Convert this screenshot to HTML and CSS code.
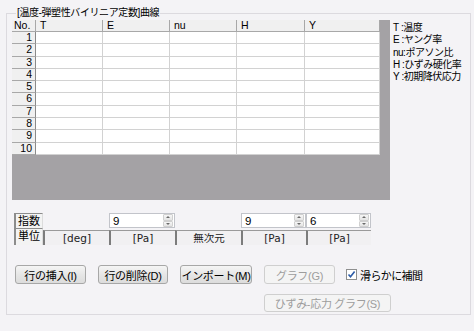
FILE: index.html
```html
<!DOCTYPE html>
<html lang="ja">
<head>
  <meta charset="UTF-8">
  <title>温度-弾塑性バイリニア定数</title>
  <link rel="stylesheet" href="styles.css">
</head>
<body>
  <fieldset class="group">
    <legend>[温度-弾塑性バイリニア定数]曲線</legend>

    <div class="top">
      <div class="grid-wrap">
        <div class="grid">
          <div class="hd corner">No.</div>
          <div class="hd">T</div>
          <div class="hd">E</div>
          <div class="hd">nu</div>
          <div class="hd">H</div>
          <div class="hd">Y</div>
        </div>
        <div class="grid rows" id="rows"></div>
      </div>
      <div class="legend-list">
        <div>T&nbsp;:温度</div>
        <div>E&nbsp;:ヤング率</div>
        <div>nu:ポアソン比</div>
        <div>H&nbsp;:ひずみ硬化率</div>
        <div>Y&nbsp;:初期降伏応力</div>
      </div>
    </div>

    <div class="params">
      <div class="lbl">指数</div>
      <div></div>
      <div class="spin"><span>9</span><i class="arrows"><b class="up"></b><b class="down"></b></i></div>
      <div></div>
      <div class="spin"><span>9</span><i class="arrows"><b class="up"></b><b class="down"></b></i></div>
      <div class="spin"><span>6</span><i class="arrows"><b class="up"></b><b class="down"></b></i></div>

      <div class="lbl">単位</div>
      <div class="unit">[deg]</div>
      <div class="unit">[Pa]</div>
      <div class="unit">無次元</div>
      <div class="unit">[Pa]</div>
      <div class="unit">[Pa]</div>
    </div>

    <div class="actions">
      <button class="btn">行の挿入(I)</button>
      <button class="btn">行の削除(D)</button>
      <button class="btn">インポート(M)</button>
      <button class="btn" disabled>グラフ(G)</button>
      <label class="check">
        <svg width="11" height="11" viewBox="0 0 11 11">
          <rect x="0.5" y="0.5" width="10" height="10" fill="#fff" stroke="#8e8f8f"/>
          <path d="M2.5 5.5 L4.5 7.8 L8.6 2.6" fill="none" stroke="#2d5ca8" stroke-width="1.6"/>
        </svg>
        滑らかに補間
      </label>
      <button class="btn wide" disabled>ひずみ-応力 グラフ(S)</button>
    </div>
  </fieldset>

  <script>
    const rows = document.getElementById('rows');
    let html = '';
    for (let i = 1; i <= 10; i++) {
      html += `<div class="num">${i}</div>`;
      for (let c = 0; c < 5; c++) html += '<div class="cell"></div>';
    }
    rows.innerHTML = html;
  </script>
</body>
</html>
```

FILE: styles.css
```css
body {
  margin: 0;
  background: #f4f3f6;
  font-family: "Liberation Sans", "Noto Sans CJK JP", sans-serif;
  font-size: 11px;
  color: #000;
}
.group {
  margin: 7px 3px 5px 6px;
  padding: 4px 0 0 5px;
  border: 1px solid #dcdadf;
  height: 308px;
  box-sizing: border-box;
}
.group legend {
  padding: 0 1px;
  margin-left: 4px;
  font-size: 10px;
  letter-spacing: -0.4px;
  line-height: 12px;
  color: #000;
}
.top {
  display: flex;
  margin-top: -3px;
}
.grid-wrap {
  width: 378px;
  height: 180px;
  background: #a4a2a5;
}
.grid {
  display: grid;
  grid-template-columns: 24px 67px 67px 67px 68px 75px;
  width: 368px;
}
.grid > div {
  box-sizing: border-box;
  overflow: hidden;
  white-space: nowrap;
}
.hd {
  height: 12px;
  line-height: 11px;
  padding-left: 4px;
  background: #f0f0f0;
  border-right: 1px solid #a8a8a8;
  border-bottom: 1px solid #a8a8a8;
  font-size: 10.5px;
}
.hd.corner {
  padding-left: 2px;
}
.rows {
  grid-auto-rows: 12.3px;
}
.num {
  background: #f0f0f0;
  border-right: 1px solid #8a8a8a;
  border-bottom: 1px solid #a8a8a8;
  text-align: right;
  padding-right: 3px;
  line-height: 11.5px;
  font-size: 10.5px;
}
.cell {
  background: #fff;
  border-right: 1px solid #d2d2d2;
  border-bottom: 1px solid #d2d2d2;
}
.legend-list {
  padding: 2px 0 0 3px;
  line-height: 12.3px;
  font-size: 10px;
  letter-spacing: -0.5px;
}
.params {
  display: grid;
  grid-template-columns: 29px 66px 66px 66px 65px 65px;
  grid-template-rows: 15px 17px;
  margin: 13px 0 0 2px;
}
.lbl {
  border-top: 1px solid #8c8c8c;
  border-left: 2px solid #8c8c8c;
  border-right: 1px solid #dcdcdc;
  padding-left: 2px;
  line-height: 14px;
  box-sizing: border-box;
  background: #f3f3f3;
}
.spin {
  display: flex;
  align-items: center;
  background: #fff;
  border: 1px solid #c2c4ca;
  box-sizing: border-box;
  height: 15px;
}
.spin span {
  flex: 1;
  padding-left: 3px;
  font-size: 11.5px;
}
.arrows {
  display: flex;
  flex-direction: column;
  width: 10px;
  height: 13px;
  margin-right: 1px;
}
.arrows b {
  flex: 1;
  position: relative;
  background: linear-gradient(#f6f6f6, #e4e4e4);
  border: 1px solid #d0d0d0;
  border-radius: 1px;
}
.arrows b::after {
  content: "";
  position: absolute;
  left: 2px;
  top: 1px;
  border-left: 2px solid transparent;
  border-right: 2px solid transparent;
}
.arrows .up::after {
  border-bottom: 2px solid #6a6a6a;
}
.arrows .down::after {
  border-top: 2px solid #6a6a6a;
}
.unit {
  margin-top: 2px;
  border-top: 1px solid #9a9a9a;
  border-left: 2px solid #7c7c7c;
  background: #f1f0f2;
  text-align: center;
  line-height: 14px;
  font-family: "DejaVu Sans", "Noto Sans CJK JP", sans-serif;
  font-size: 10.5px;
  color: #222;
}
.actions {
  display: grid;
  grid-template-columns: 71px 70px 72px 71px auto;
  grid-template-rows: 19px 18px;
  column-gap: 12px;
  row-gap: 10px;
  margin: 20px 0 0 3px;
}
.btn {
  font-family: "Liberation Sans", "Noto Sans CJK JP", sans-serif;
  font-size: 11px;
  letter-spacing: -0.3px;
  padding: 0;
  border: 1px solid #a7a7a7;
  border-radius: 3px;
  background: linear-gradient(#f5f5f5, #e6e6e6 50%, #dcdcdc);
  color: #000;
}
.btn:disabled {
  border-color: #cfcfcf;
  background: #f4f4f4;
  color: #9d9d9d;
}
.btn.wide {
  grid-column: 4 / 6;
  width: 127px;
}
.check {
  display: flex;
  align-items: center;
  gap: 3px;
  margin-left: -1px;
  letter-spacing: -0.6px;
}
```
